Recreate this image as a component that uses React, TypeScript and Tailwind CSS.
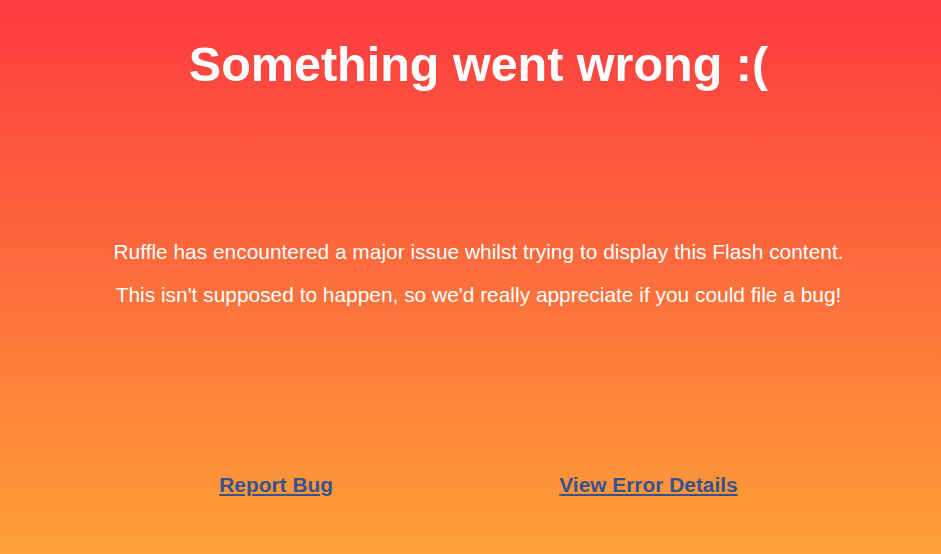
export default function App() {
  return (
    <div className="h-[554px] w-[941px] overflow-hidden bg-[linear-gradient(180deg,#fd3a40_0%,#fda138_100%)]">
      <div
        className="-ml-[7px] flex h-[554px] w-[971px] flex-col justify-between pt-[37px] pb-[38px] text-center text-[20px] text-white"
        style={{ fontFamily: '"Liberation Sans", Arial, sans-serif' }}
      >
        <div className="text-[48.5px] font-bold leading-[55px]">Something went wrong :(</div>
        <div className="text-[20.9px]">
          <p className="my-5 leading-[23px]">Ruffle has encountered a major issue whilst trying to display this Flash content.</p>
          <p className="my-5 leading-[23px]">This isn't supposed to happen, so we'd really appreciate if you could file a bug!</p>
        </div>
        <ul className="my-5 flex justify-evenly p-0 text-[20.9px] leading-[23px]">
          <li>
            <a href="#" className="font-bold text-[#37528c] underline">Report Bug</a>
          </li>
          <li>
            <a href="#" className="font-bold text-[#37528c] underline">View Error Details</a>
          </li>
        </ul>
      </div>
    </div>
  );
}
